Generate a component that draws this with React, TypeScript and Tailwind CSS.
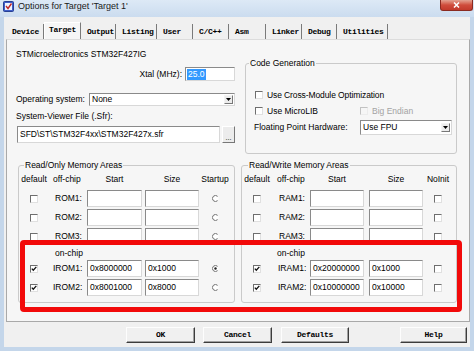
import React from 'react'

const tabs = [
  { label: 'Device', w: 'w-[38px]' },
  { label: 'Target', w: 'w-[37px]', active: true },
  { label: 'Output', w: 'w-[35px]' },
  { label: 'Listing', w: 'w-[41px]' },
  { label: 'User', w: 'w-[36px]' },
  { label: 'C/C++', w: 'w-[36px]' },
  { label: 'Asm', w: 'w-[37px]' },
  { label: 'Linker', w: 'w-[36px]' },
  { label: 'Debug', w: 'w-[35px]' },
  { label: 'Utilities', w: 'w-[51px]' },
]

function Check({ checked = false, disabled = false }: { checked?: boolean; disabled?: boolean }) {
  return (
    <span
      className={
        disabled
          ? 'relative inline-block h-[8px] w-[8px] shrink-0 border border-t-[#c2c2c2] border-l-[#c2c2c2] border-r-[#ececec] border-b-[#ececec] bg-[#f6f6f6]'
          : 'relative inline-block h-[8px] w-[8px] shrink-0 border border-t-[#6e6e6e] border-l-[#6e6e6e] border-r-[#e0e0e0] border-b-[#e0e0e0] bg-white'
      }
    >
      {checked && (
        <svg className="absolute left-0 top-0" width="6" height="6" viewBox="0 0 6 6">
          <path d="M0.8 2.6 L2.3 4.3 L5.3 0.9" stroke="#111" strokeWidth="1.3" fill="none" />
        </svg>
      )}
    </span>
  )
}

function Radio({ checked = false }: { checked?: boolean }) {
  return (
    <svg width="7" height="7" viewBox="0 0 7 7">
      <circle cx="3.5" cy="3.5" r="3" fill="#fff" />
      <path d="M5.6 1.4 A3 3 0 1 0 5.6 5.6" stroke="#6a6a6a" strokeWidth="1" fill="none" />
      {checked && <circle cx="3.5" cy="3.5" r="1.2" fill="#222" />}
    </svg>
  )
}

function Field({ value = '', className = '' }: { value?: string; className?: string }) {
  return (
    <div
      className={`h-full shrink-0 border border-t-[#8a8a8a] border-l-[#8a8a8a] border-r-[#d8d8d8] border-b-[#d8d8d8] bg-white pl-[2px] leading-[14px] ${className}`}
    >
      {value}
    </div>
  )
}

function Select({ value, className = '' }: { value: string; className?: string }) {
  return (
    <div
      className={`flex h-full shrink-0 items-center border border-t-[#8a8a8a] border-l-[#8a8a8a] border-r-[#d8d8d8] border-b-[#d8d8d8] bg-white pl-[2px] ${className}`}
    >
      <span className="flex-1">{value}</span>
      <span className="mr-[1px] flex h-[9px] w-[9px] items-center justify-center border border-t-[#f4f4f4] border-l-[#f4f4f4] border-r-[#777] border-b-[#777] bg-[#ececec]">
        <svg width="5" height="3" viewBox="0 0 5 3">
          <path d="M0 0 H5 L2.5 3 Z" fill="#000" />
        </svg>
      </span>
    </div>
  )
}

function RomRow({
  label,
  start = '',
  size = '',
  checked = false,
  startup = false,
  labelPad = 'pl-[6px]',
  top = 'mt-[2px]',
}: {
  label: string
  start?: string
  size?: string
  checked?: boolean
  startup?: boolean
  labelPad?: string
  top?: string
}) {
  return (
    <div className={`flex h-[17px] items-center ${top}`}>
      <span className="flex w-[30px] justify-center">
        <Check checked={checked} />
      </span>
      <span className={`w-[38px] ${labelPad}`}>{label}</span>
      <Field className="w-[55px]" value={start} />
      <Field className="ml-[3px] w-[54px]" value={size} />
      <span className="flex w-[32px] justify-center">
        <Radio checked={startup} />
      </span>
    </div>
  )
}

function RamRow({
  label,
  start = '',
  size = '',
  checked = false,
  labelPad = 'pl-[7px]',
  top = 'mt-[2px]',
}: {
  label: string
  start?: string
  size?: string
  checked?: boolean
  labelPad?: string
  top?: string
}) {
  return (
    <div className={`flex h-[17px] items-center ${top}`}>
      <span className="flex w-[30px] justify-center">
        <Check checked={checked} />
      </span>
      <span className={`w-[38px] ${labelPad}`}>{label}</span>
      <Field className="w-[54px]" value={start} />
      <Field className="ml-[5px] w-[54px]" value={size} />
      <span className="flex w-[30px] justify-center">
        <Check />
      </span>
    </div>
  )
}

function WinButton({ label, className = '' }: { label: string; className?: string }) {
  return (
    <div
      className={`flex h-[16px] items-center justify-center border border-t-[#fdfdfd] border-l-[#fdfdfd] border-r-[#3c3c3c] border-b-[#3c3c3c] bg-[#f0f0f0] font-['Liberation_Mono',monospace] text-[8px] font-bold tracking-[-0.3px] shadow-[inset_-1px_-1px_0_#a0a0a0] ${className}`}
    >
      {label}
    </div>
  )
}

export default function App() {
  return (
    <div className="relative flex h-[351px] w-[474px] flex-col overflow-hidden bg-[#c4d6ea] font-['Liberation_Sans',Arial,sans-serif] text-[8.5px] text-black">
      {/* Title bar */}
      <div className="flex h-[17px] shrink-0 items-start bg-gradient-to-b from-[#dde9f6] to-[#cbdcef]">
        <svg className="ml-[3px] mt-[1px]" width="11" height="11" viewBox="0 0 11 11">
          <rect x="0.5" y="0.5" width="10" height="10" rx="1" fill="#3f5fc8" stroke="#273f94" />
          <rect x="2" y="2" width="7" height="7" fill="#eef3ff" />
          <path d="M3 5 L5 7.5 L8.5 2.5" stroke="#c02828" strokeWidth="1.4" fill="none" />
        </svg>
        <span className="ml-[4px] text-[9px] leading-[12px] text-[#1a1a1a]">Options for Target 'Target 1'</span>
        <div className="ml-auto mr-[1px] flex h-[11px] w-[33px] items-center justify-center rounded-b-[3px] border border-t-0 border-[#8a2a20] bg-gradient-to-b from-[#e2a191] via-[#cf4c3c] to-[#c23a2b]">
          <svg width="7" height="6" viewBox="0 0 7 6">
            <path d="M1 0.5 L6 5.5 M6 0.5 L1 5.5" stroke="#fff" strokeWidth="1.5" />
          </svg>
        </div>
      </div>

      <div className="mx-[4px] mb-[4px] flex flex-1 flex-col bg-[#f0f0f0]">
        {/* Tabs */}
        <div className="ml-[2px] mt-[7px] flex h-[15px] items-stretch font-['Liberation_Mono',monospace] text-[8px] font-bold tracking-[-0.3px]">
          {tabs.map((t) =>
            t.active ? (
              <div
                key={t.label}
                className={`${t.w} -mt-[2px] flex h-[17px] items-center border-l border-t border-r border-l-white border-t-white border-r-[#7a7a7a] bg-[#f6f6f6] pb-[2px] pl-[4px]`}
              >
                {t.label}
              </div>
            ) : (
              <div key={t.label} className={`${t.w} flex items-center border-r border-[#7a7a7a] pl-[6px]`}>
                {t.label}
              </div>
            )
          )}
        </div>

        {/* Tab panel */}
        <div className="ml-[2px] flex h-[283px] w-[464px] flex-col border border-[#a9a9a9] border-t-[#dcdcdc] bg-[#f6f6f6]">
          <div className="flex">
            {/* Left column */}
            <div className="ml-[9px] flex w-[219px] flex-col">
              <div className="mt-[7px] h-[14px] leading-[14px]">STMicroelectronics STM32F427IG</div>
              <div className="mt-[6px] flex h-[14px] items-center justify-end">
                <span className="mr-[3px]">Xtal (MHz):</span>
                <div className="flex h-full w-[50px] items-center border border-t-[#8a8a8a] border-l-[#8a8a8a] border-r-[#d8d8d8] border-b-[#d8d8d8] bg-white pl-[1px]">
                  <span className="bg-[#3399ff] px-[1px] leading-[11px] text-white">25.0</span>
                </div>
              </div>
              <div className="mt-[12px] flex h-[13px] items-center">
                <span className="w-[73px]">Operating system:</span>
                <Select className="w-[146px]" value="None" />
              </div>
              <div className="mt-[3px] h-[14px] leading-[14px]">System-Viewer File (.Sfr):</div>
              <div className="mt-[3px] flex h-[17px]">
                <Field className="ml-[1px] w-[203px] leading-[15px]" value="SFD\ST\STM32F4xx\STM32F427x.sfr" />
                <div className="ml-[2px] flex h-[17px] w-[13px] items-end justify-center border border-t-white border-l-white border-r-[#777] border-b-[#777] bg-[#ececec] pb-[1px] text-[7px] leading-[7px]">
                  ...
                </div>
              </div>
            </div>

            {/* Code Generation */}
            <fieldset className="ml-[10px] mt-[17px] h-[97px] w-[212px] rounded-[3px] border border-[#cacaca]">
              <legend className="ml-[3px] px-[1px] leading-[12px]">Code Generation</legend>
              <div className="ml-[9px] mt-[19px] flex h-[14px] items-center">
                <Check />
                <span className="ml-[4px] tracking-[-0.1px]">Use Cross-Module Optimization</span>
              </div>
              <div className="ml-[9px] mt-[2px] flex h-[14px] items-center">
                <div className="flex w-[105px] items-center">
                  <Check />
                  <span className="ml-[4px]">Use MicroLIB</span>
                </div>
                <Check disabled />
                <span className="ml-[4px] text-[#a3a3a3]">Big Endian</span>
              </div>
              <div className="ml-[8px] mt-[2px] flex h-[15px] items-center">
                <span className="w-[106px]">Floating Point Hardware:</span>
                <Select className="w-[92px]" value="Use FPU" />
              </div>
            </fieldset>
          </div>

          {/* Memory areas */}
          <div className="mt-[5px] flex">
            <fieldset className="ml-[11px] h-[144px] w-[217px] rounded-[3px] border border-[#cacaca]">
              <legend className="ml-[5px] px-[1px] leading-[12px]">Read/Only Memory Areas</legend>
              <div className="mt-[2px] flex h-[12px] items-center">
                <span className="w-[30px] text-center">default</span>
                <span className="w-[38px] pl-[4px]">off-chip</span>
                <span className="w-[55px] text-center">Start</span>
                <span className="ml-[3px] w-[54px] text-center">Size</span>
                <span className="w-[32px] text-center">Startup</span>
              </div>
              <RomRow label="ROM1:" top="mt-[5px]" />
              <RomRow label="ROM2:" />
              <RomRow label="ROM3:" />
              <div className="mt-[2px] flex h-[13px] items-center">
                <span className="ml-[36px]">on-chip</span>
              </div>
              <RomRow label="IROM1:" labelPad="pl-[4px]" top="mt-0" checked startup start="0x8000000" size="0x1000" />
              <RomRow label="IROM2:" labelPad="pl-[4px]" checked start="0x8001000" size="0x8000" />
            </fieldset>

            <fieldset className="ml-[6px] h-[144px] w-[216px] rounded-[3px] border border-[#cacaca]">
              <legend className="ml-[6px] px-[1px] leading-[12px]">Read/Write Memory Areas</legend>
              <div className="mt-[2px] flex h-[12px] items-center">
                <span className="w-[30px] text-center">default</span>
                <span className="w-[38px] pl-[5px]">off-chip</span>
                <span className="w-[54px] text-center">Start</span>
                <span className="ml-[5px] w-[54px] text-center">Size</span>
                <span className="w-[30px] text-center">NoInit</span>
              </div>
              <RamRow label="RAM1:" top="mt-[5px]" />
              <RamRow label="RAM2:" />
              <RamRow label="RAM3:" />
              <div className="mt-[2px] flex h-[13px] items-center">
                <span className="ml-[35px]">on-chip</span>
              </div>
              <RamRow label="IRAM1:" labelPad="pl-[6px]" top="mt-0" checked start="0x20000000" size="0x1000" />
              <RamRow label="IRAM2:" labelPad="pl-[6px]" checked start="0x10000000" size="0x10000" />
            </fieldset>
          </div>
        </div>

        {/* Buttons */}
        <div className="mt-[5px] flex h-[16px]">
          <WinButton label="OK" className="ml-[122px] w-[69px]" />
          <WinButton label="Cancel" className="ml-[8px] w-[69px]" />
          <WinButton label="Defaults" className="ml-[9px] w-[68px]" />
          <WinButton label="Help" className="ml-[51px] w-[67px]" />
        </div>
      </div>

      {/* Red highlight annotation */}
      <div className="pointer-events-none absolute left-[20px] top-[240px] h-[72px] w-[442px] rounded-[4px] border-[5px] border-[#f20a0a]" />
    </div>
  )
}
